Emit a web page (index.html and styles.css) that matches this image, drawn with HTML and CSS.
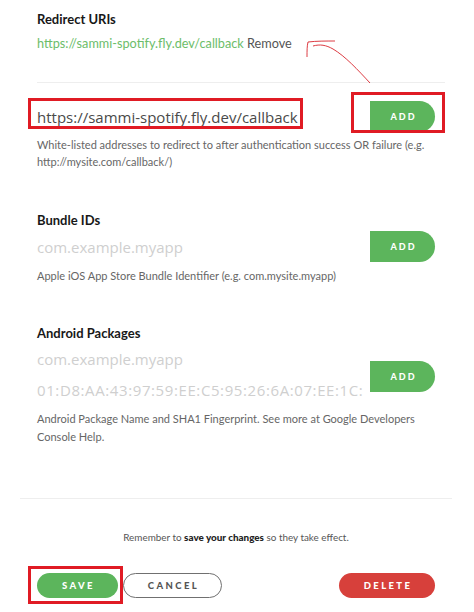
FILE: index.html
```html
<!DOCTYPE html>
<html lang="en">
<head>
<meta charset="utf-8">
<title>Redirect URIs</title>
<link rel="stylesheet" href="styles.css">
</head>
<body>
<main class="page">
  <section class="sec sec-first">
    <h3 class="title">Redirect URIs</h3>
    <div class="uri-row"><a class="uri" href="#">https://sammi-spotify.fly.dev/callback</a> <span class="remove">Remove</span></div>
    <hr class="divider">
    <div class="add-row">
      <div class="fields">
        <input class="field filled" type="text" value="https://sammi-spotify.fly.dev/callback">
      </div>
      <button class="btn-add" type="button">ADD</button>
    </div>
    <p class="help">White-listed addresses to redirect to after authentication success OR failure (e.g. http://mysite.com/callback/)</p>
  </section>

  <section class="sec">
    <h3 class="title">Bundle IDs</h3>
    <div class="add-row">
      <div class="fields">
        <input class="field" type="text" placeholder="com.example.myapp">
      </div>
      <button class="btn-add" type="button">ADD</button>
    </div>
    <p class="help">Apple iOS App Store Bundle Identifier (e.g. com.mysite.myapp)</p>
  </section>

  <section class="sec sec-android">
    <h3 class="title">Android Packages</h3>
    <div class="add-row">
      <div class="fields">
        <input class="field" type="text" placeholder="com.example.myapp">
        <input class="field field-sha" type="text" placeholder="01:D8:AA:43:97:59:EE:C5:95:26:6A:07:EE:1C:">
      </div>
      <button class="btn-add btn-add-low" type="button">ADD</button>
    </div>
    <p class="help">Android Package Name and SHA1 Fingerprint. See more at Google Developers Console Help.</p>
  </section>

  <hr class="divider divider-wide">
  <p class="remember">Remember to <b>save your changes</b> so they take effect.</p>
  <div class="actions">
    <div class="actions-left">
      <button class="btn btn-save" type="button">SAVE</button>
      <button class="btn btn-cancel" type="button">CANCEL</button>
    </div>
    <button class="btn btn-delete" type="button">DELETE</button>
  </div>

  <div class="mark mark-input"></div>
  <div class="mark mark-add"></div>
  <div class="mark mark-save"></div>
  <svg class="arrow" width="90" height="60" viewBox="0 0 90 60" aria-hidden="true">
    <path d="M70 53 C58 40 45 26 33 19 C26 15 20 14 13 16" fill="none" stroke="#d8262e" stroke-width="0.9"/>
    <path d="M7 27 C7 21 7 16 8 12 C16 11 26 11 35 11" fill="none" stroke="#d8262e" stroke-width="0.9"/>
  </svg>
</main>
</body>
</html>
```

FILE: styles.css
```css
* { box-sizing: border-box; }

body {
  margin: 0;
  background: #fff;
  font-family: "Lato", "Liberation Sans", sans-serif;
  color: #222;
}

.page {
  position: relative;
  width: 474px;
  height: 612px;
  padding: 11px 39px 0 37px;
  overflow: hidden;
}

.sec { margin-top: 42px; }
.sec-first { margin-top: 0; }
.sec-android { margin-top: 41px; }

.title {
  margin: 0;
  font-size: 13px;
  line-height: 16px;
  font-weight: 700;
  color: #181818;
}

.uri-row {
  margin-top: 7px;
  font-size: 12.7px;
  line-height: 18px;
}

.uri { color: #6cbd6a; text-decoration: none; }
.remove { color: #555; }

.divider {
  margin: 30px -10px 0 0;
  border: 0;
  height: 1px;
  background: #eeeeee;
}

.add-row {
  margin-top: 18px;
  display: flex;
  align-items: center;
  justify-content: space-between;
}

.sec + .sec .add-row { margin-top: 3px; }

.fields {
  display: flex;
  flex-direction: column;
  gap: 1px;
}

.field {
  display: block;
  width: 326px;
  height: 30px;
  padding: 0;
  border: 0;
  outline: none;
  background: transparent;
  font-family: "Open Sans", "Liberation Sans", sans-serif;
  font-size: 15px;
  color: #555;
}

.field-sha { letter-spacing: 0.6px; }

.field::placeholder { color: #cfcfcf; }
.filled { color: #4a4a4a; }

.btn-add {
  width: 65px;
  height: 31px;
  border: 0;
  border-radius: 0 16px 16px 0;
  background: #5cb55c;
  color: #fff;
  font-family: "Lato", "Liberation Sans", sans-serif;
  font-weight: 900;
  font-size: 9px;
  letter-spacing: 2px;
  padding: 0 0 0 2px;
}

.btn-add-low { margin-top: 4px; }

.help {
  margin: 4px 0 0;
  font-size: 11px;
  line-height: 17px;
  color: #666;
}

.sec + .sec .help { margin-top: 5px; }
.sec-android .help { margin-top: 8px; line-height: 18px; }

.divider-wide {
  margin: 52px -17px 0 -17px;
}

.remember {
  margin: 30px 0 0;
  text-align: center;
  font-size: 9.9px;
  line-height: 16px;
  color: #555;
}

.remember b { color: #222; font-weight: 900; }

.actions {
  margin-top: 28px;
  display: flex;
  justify-content: space-between;
  align-items: center;
}

.actions-left { display: flex; gap: 5px; }

.btn {
  height: 25px;
  border-radius: 13px;
  border: 0;
  font-family: "Lato", "Liberation Sans", sans-serif;
  font-weight: 900;
  font-size: 9.5px;
  letter-spacing: 2.4px;
  color: #fff;
  padding: 0 0 0 2px;
}

.btn-save { width: 81px; background: #5cb55c; }
.btn-cancel {
  width: 99px;
  background: #fff;
  border: 1.5px solid #707070;
  color: #555;
}
.btn-delete { width: 96px; background: #d7403b; }

.mark {
  position: absolute;
  border: 3px solid #e01b24;
}
.mark-input { left: 28px; top: 98px; width: 275px; height: 31px; }
.mark-add { left: 351px; top: 92px; width: 94px; height: 41px; }
.mark-save { left: 28px; top: 566px; width: 95px; height: 38px; }

.arrow {
  position: absolute;
  left: 300px;
  top: 30px;
}
```
